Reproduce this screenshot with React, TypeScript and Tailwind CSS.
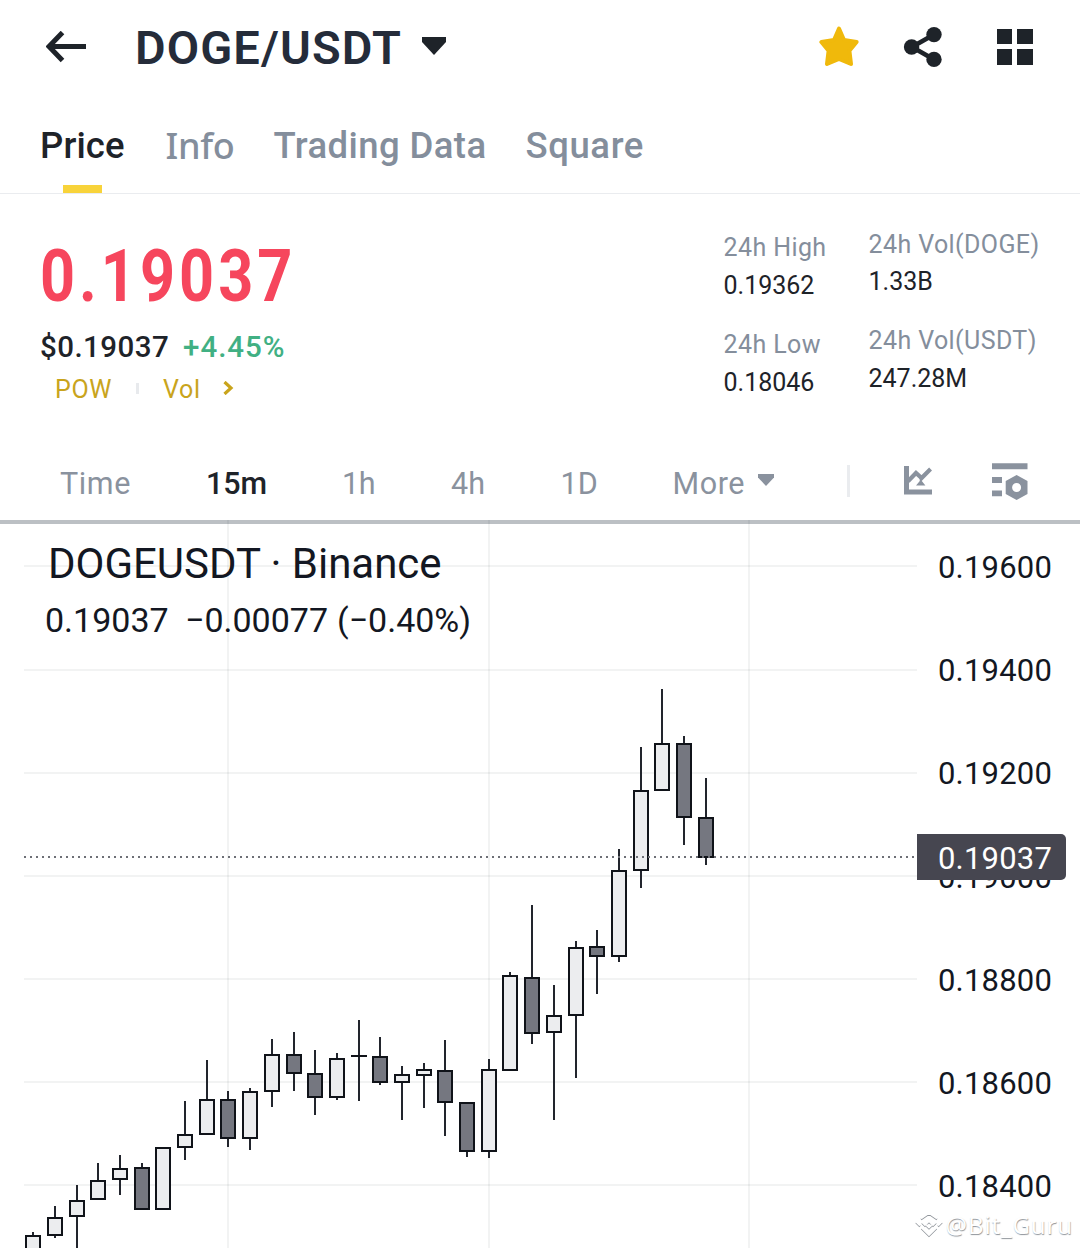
import React from "react";

type Candle = {
  x: number;
  top: number;
  bottom: number;
  high: number;
  low: number;
  down?: boolean;
};

// Vertical coordinates are page pixels; the drawing area begins at y = 520.
const CHART_TOP = 520;

const candles: Candle[] = [
  { x: 25, top: 1235, bottom: 1262, high: 1232, low: 1262 },
  { x: 47, top: 1217, bottom: 1236, high: 1206, low: 1238 },
  { x: 69, top: 1200, bottom: 1217, high: 1185, low: 1262 },
  { x: 90, top: 1180, bottom: 1200, high: 1163, low: 1200 },
  { x: 112, top: 1168, bottom: 1180, high: 1155, low: 1195 },
  { x: 134, top: 1167, bottom: 1210, high: 1163, low: 1210, down: true },
  { x: 155, top: 1147, bottom: 1210, high: 1147, low: 1210 },
  { x: 177, top: 1134, bottom: 1148, high: 1101, low: 1160 },
  { x: 199, top: 1099, bottom: 1135, high: 1060, low: 1135 },
  { x: 220, top: 1099, bottom: 1139, high: 1091, low: 1147, down: true },
  { x: 242, top: 1091, bottom: 1139, high: 1088, low: 1150 },
  { x: 264, top: 1054, bottom: 1092, high: 1039, low: 1107 },
  { x: 286, top: 1054, bottom: 1074, high: 1032, low: 1091, down: true },
  { x: 307, top: 1073, bottom: 1098, high: 1050, low: 1115, down: true },
  { x: 329, top: 1058, bottom: 1098, high: 1053, low: 1100 },
  { x: 351, top: 1055, bottom: 1057, high: 1020, low: 1101 },
  { x: 372, top: 1056, bottom: 1083, high: 1037, low: 1085, down: true },
  { x: 394, top: 1074, bottom: 1083, high: 1066, low: 1120 },
  { x: 416, top: 1069, bottom: 1076, high: 1063, low: 1108 },
  { x: 437, top: 1070, bottom: 1103, high: 1040, low: 1136, down: true },
  { x: 459, top: 1102, bottom: 1152, high: 1102, low: 1157, down: true },
  { x: 481, top: 1069, bottom: 1152, high: 1059, low: 1158 },
  { x: 502, top: 975, bottom: 1071, high: 972, low: 1071 },
  { x: 524, top: 977, bottom: 1034, high: 905, low: 1044, down: true },
  { x: 546, top: 1015, bottom: 1033, high: 985, low: 1120 },
  { x: 568, top: 947, bottom: 1016, high: 941, low: 1078 },
  { x: 589, top: 946, bottom: 957, high: 930, low: 994, down: true },
  { x: 611, top: 870, bottom: 957, high: 849, low: 962 },
  { x: 633, top: 790, bottom: 871, high: 747, low: 888 },
  { x: 654, top: 743, bottom: 791, high: 689, low: 791 },
  { x: 676, top: 743, bottom: 818, high: 736, low: 845, down: true },
  { x: 698, top: 817, bottom: 858, high: 778, low: 865, down: true },
];

const gridRows = [566, 670, 773, 876, 979, 1082, 1185];
const gridColumns = [228, 489, 749];
const axisPrices = ["0.19600", "0.19400", "0.19200", "0.19000", "0.18800", "0.18600", "0.18400"];

function Header() {
  return (
    <header className="flex h-[93px] items-center pr-[47.5px] pl-[46px] text-[#1e2329]">
      <svg className="h-8 w-10" viewBox="0 0 40 32" fill="none" stroke="currentColor" strokeWidth="5">
        <path d="M3 15.5H40" />
        <path d="M16.5 1.5L3 15.5L16.5 29.5" />
      </svg>
      <h1 className="ml-[49px] w-[286.5px] pt-[3px] text-[47px] leading-[60px] font-semibold tracking-[1.1px] text-[#252c3a]">
        DOGE/USDT
      </h1>
      <svg className="-mt-px h-[18px] w-6" viewBox="0 0 24 18" fill="currentColor">
        <path d="M0 0H24V5L12 18L0 5Z" />
      </svg>
      <div className="ml-auto flex items-center">
        <svg className="h-[42px] w-[42px] text-[#f0b90b]" viewBox="0 0 42 42" fill="currentColor" stroke="currentColor" strokeWidth="4" strokeLinejoin="round">
          <path d="M21 2.6L26 14L38.6 16L31.4 24.8L33 38L21 33L9 38L10.6 24.8L3.4 16L16 14Z" />
        </svg>
        <svg className="ml-[43px] h-[42px] w-10" viewBox="0 0 40 42" fill="currentColor" stroke="currentColor">
          <path d="M31 8.6L9 21L31 33.4" fill="none" strokeWidth="4.6" />
          <g stroke="none">
            <circle cx="8.6" cy="21" r="7.7" />
            <circle cx="31" cy="8.6" r="7.7" />
            <circle cx="31" cy="33.4" r="7.7" />
          </g>
        </svg>
        <div className="ml-[54px] grid grid-cols-2 gap-[5px]">
          <i className="size-[15.5px] bg-current" />
          <i className="size-[15.5px] bg-current" />
          <i className="size-[15.5px] bg-current" />
          <i className="size-[15.5px] bg-current" />
        </div>
      </div>
    </header>
  );
}

function Tabs() {
  return (
    <nav className="flex h-[101px] border-b border-[#eaecef] pl-[40px] text-[36.5px] leading-[106px] font-medium text-[#848e9c]">
      <div className="relative w-[125.5px] tracking-[0.1px] text-[#1e2329]">
        Price
        <span className="absolute bottom-0 left-[23px] h-2 w-[39px] bg-[#f8d33a]" />
      </div>
      <div className="w-[108px] font-['Noto_Sans',sans-serif] text-[36px] tracking-[-0.27px]">Info</div>
      <div className="w-[252px] tracking-[0.4px]">Trading Data</div>
      <div className="tracking-[0.6px]">Square</div>
    </nav>
  );
}

function Stat({ label, value }: { label: string; value: string }) {
  return (
    <div>
      <div className="tracking-[0.4px] text-[#848e9c]">{label}</div>
      <div className="text-[#1e2329]">{value}</div>
    </div>
  );
}

function Summary() {
  return (
    <section className="flex h-[250px] pl-10">
      <div className="w-[683.5px] pt-[47px]">
        <div className="origin-left scale-x-[0.85] text-[72px] leading-[72px] font-bold tracking-[4.7px] text-[#f6465d]">
          0.19037
        </div>
        <div className="mt-[12px] flex text-[29.5px] leading-[45px] font-medium">
          <span className="w-[143px] tracking-[0.45px] text-[#1e2329]">$0.19037</span>
          <span className="tracking-[1px] text-[#41b083]">+4.45%</span>
        </div>
        <div className="mt-[2px] flex items-center pl-[15px] text-[25px] leading-9 text-[#c9a41c]">
          <span className="w-[81px] tracking-[0.66px]">POW</span>
          <span className="-mt-1 h-[11px] w-[3px] bg-[#e8eaed]" />
          <span className="ml-[24px] w-[60px] tracking-[0.69px]">Vol</span>
          <svg className="-mt-[4px] h-[14px] w-[11px]" viewBox="0 0 11 14" fill="none" stroke="currentColor" strokeWidth="3.2">
            <path d="M1.5 1L8 7L1.5 13" />
          </svg>
        </div>
      </div>
      <div className="flex w-[145px] flex-col gap-[21px] pt-[34.5px] text-[25px] leading-[38px]">
        <Stat label="24h High" value="0.19362" />
        <Stat label="24h Low" value="0.18046" />
      </div>
      <div className="flex flex-col gap-[21.5px] pt-[31.5px] text-[25px] leading-[37.5px]">
        <Stat label="24h Vol(DOGE)" value="1.33B" />
        <Stat label="24h Vol(USDT)" value="247.28M" />
      </div>
    </section>
  );
}

function IntervalBar() {
  return (
    <div className="flex h-[76px] items-center pl-[60px] text-[30.5px] leading-[73px] text-[#8a929e]">
      <span className="w-[146px] pt-[2px] tracking-[0.6px]">Time</span>
      <span className="w-[136px] pt-[2px] font-medium tracking-[-0.1px] text-[#1e2329]">15m</span>
      <span className="w-[109px] pt-[2px] tracking-[-0.4px]">1h</span>
      <span className="w-[109.5px] pt-[2px]">4h</span>
      <span className="w-[112px] pt-[2px]">1D</span>
      <span className="w-[85.5px] pt-[2px] tracking-[0.6px]">More</span>
      <svg className="-mt-1 h-3 w-4" viewBox="0 0 16 12" fill="currentColor">
        <path d="M0 0H16V3.4L8 12L0 3.4Z" />
      </svg>
      <span className="-mt-[2px] ml-[73px] h-8 w-[3px] bg-[#eaecef]" />
      <svg className="-mt-[3px] ml-[54px] h-[29px] w-[28px]" viewBox="0 0 28 29" fill="none" stroke="currentColor">
        <path d="M2.5 0V26H28" strokeWidth="5" />
        <path d="M4 15.2L12 7L17.6 12L26.6 3" strokeWidth="4.2" />
        <path d="M15.6 11H18L17.8 15L21.4 19.4H12L15.8 15Z" fill="currentColor" stroke="none" />
      </svg>
      <svg className="-mt-[2px] ml-[60px] h-[37px] w-9" viewBox="0 0 36 37" fill="currentColor">
        <path d="M0 0.3H35.5V6.3H0ZM0 14H10V20H0ZM0 27.4H10V33.3H0Z" />
        <path
          fillRule="evenodd"
          d="M24.6 12L35.5 18V31L24.6 37L13.7 31V18ZM24.6 20A4.5 4.5 0 1 0 24.6 29A4.5 4.5 0 1 0 24.6 20Z"
        />
      </svg>
    </div>
  );
}

function CandleChart() {
  return (
    <svg className="absolute inset-0 h-[728px] w-[1080px]" viewBox={`0 ${CHART_TOP} 1080 728`} shapeRendering="crispEdges">
      {gridRows.map((y) => (
        <rect key={y} x="24" y={y - 1} width="893" height="2" fill="#f2f3f3" />
      ))}
      {gridColumns.map((x) => (
        <rect key={x} x={x - 1} y="520" width="2" height="728" fill="#2a2e39" fillOpacity="0.06" />
      ))}
      {candles.map((c) => (
        <g key={c.x}>
          <rect x={c.x + 7} y={c.high} width="2" height={c.low - c.high} fill="#22252d" />
          {c.bottom - c.top > 2 ? (
            <rect
              x={c.x + 1}
              y={c.top + 1}
              width="14"
              height={c.bottom - c.top - 2}
              fill={c.down ? "#757780" : "#ecedef"}
              stroke="#101319"
              strokeWidth="2"
            />
          ) : (
            <rect x={c.x} y={c.top} width="16" height="2" fill="#101319" />
          )}
        </g>
      ))}
      <path d="M24 857H917" stroke="#6d6f76" strokeWidth="2" strokeDasharray="2 4" />
    </svg>
  );
}

function Chart() {
  return (
    <section className="relative flex h-[728px] justify-between border-t-4 border-[#bcc0c4] text-[#131722]">
      <div className="absolute inset-x-0 -top-1 h-[728px]">
        <CandleChart />
      </div>
      <div className="relative pt-3">
        <div className="pl-12 text-[42px] leading-[56px] tracking-[-0.03px]">DOGEUSDT · Binance</div>
        <div className="flex pl-[45px] text-[34px] leading-[57px]">
          <span className="w-[140px]">0.19037</span>
          <span className="w-[152px]">−0.00077</span>
          <span>(−0.40%)</span>
        </div>
      </div>
      <div className="relative w-[163px]">
        <div className="flex flex-col gap-[63.2px] pt-[24px] pl-[21px] text-[31px] leading-10 tracking-[0.2px]">
          {axisPrices.map((price) => (
            <div key={price}>{price}</div>
          ))}
        </div>
        <div className="absolute top-[310px] left-0 h-[46px] w-[149px] rounded-r-[5px] bg-[#464650] pl-[21px] text-[31px] leading-[49px] tracking-[0.2px] text-white">
          0.19037
        </div>
      </div>
      <div className="absolute right-[7px] bottom-[2px] flex items-center gap-[3px] text-white">
        <svg className="h-[26px] w-7 drop-shadow-[0_1px_0.5px_#8f949a]" viewBox="0 0 28 26" fill="none" stroke="currentColor" strokeWidth="1.8">
          <path d="M6 6.5L14 1L22 6.5M1 9.5L5 13.5M27 9.5L23 13.5M7 10L10 13L14 9L18 13L21 10M11.5 13L14 15.5L16.5 13M6.5 15.5L14 23L21.5 15.5" />
        </svg>
        <span className="font-['Noto_Sans',sans-serif] text-2xl leading-[42px] tracking-[0.85px] [text-shadow:0.5px_0.5px_1px_#8f949a]">
          @Bit_Guru
        </span>
      </div>
    </section>
  );
}

export default function App() {
  return (
    <main className="h-[1248px] w-[1080px] overflow-hidden bg-white font-[Roboto,sans-serif] whitespace-nowrap">
      <Header />
      <Tabs />
      <Summary />
      <IntervalBar />
      <Chart />
    </main>
  );
}
